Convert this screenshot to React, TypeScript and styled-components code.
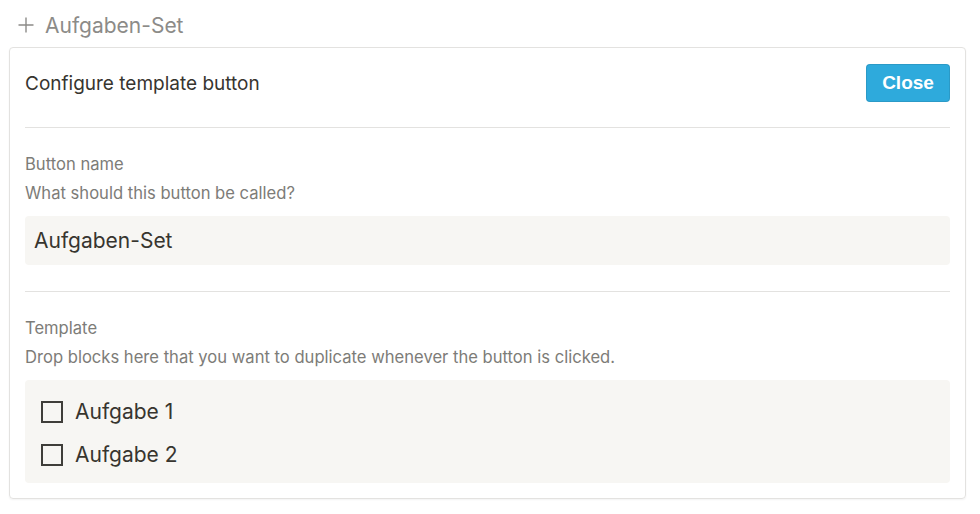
import React from 'react'
import styled, { createGlobalStyle } from 'styled-components'

const palette = {
	text: '#37352f',
	muted: '#7d7c78',
	faint: '#8c8b88',
	line: '#e3e2e0',
	field: '#f7f6f3',
	blue: '#2eaadc',
}

const GlobalStyle = createGlobalStyle`
	body {
		margin: 0;
		background: #ffffff;
		font-family: Inter, "Noto Sans", sans-serif;
		color: ${palette.text};
	}
`;

interface TodoProps {
	label: string;
}
const Todo = ({label}: TodoProps) => (
	<TodoRow>
		<Checkbox />
		<TodoText>{label}</TodoText>
	</TodoRow>
);

const PlusIcon = () => (
	<svg width="16" height="16" viewBox="0 0 16 16">
		<path d="M8 0.5v15M0.5 8h15" stroke={palette.faint} strokeWidth="1.4" fill="none" />
	</svg>
);

const App = () => {
	return (
		<>
			<GlobalStyle />
			<Page>
				<TopRow>
					<PlusIcon />
					<TopLabel>Aufgaben-Set</TopLabel>
				</TopRow>
				<Card>
					<Header>
						<Title>Configure template button</Title>
						<CloseButton>Close</CloseButton>
					</Header>
					<Section>
						<Label>Button name</Label>
						<Hint>What should this button be called?</Hint>
						<NameField>Aufgaben-Set</NameField>
					</Section>
					<Section>
						<Label>Template</Label>
						<Hint>Drop blocks here that you want to duplicate whenever the button is clicked.</Hint>
						<TemplateBox>
							<Todo label="Aufgabe 1" />
							<Todo label="Aufgabe 2" />
						</TemplateBox>
					</Section>
				</Card>
			</Page>
		</>
	);
}

const Page = styled.div`
	display: flex;
	flex-direction: column;
	padding: 0 14px 15px 9px;
`;

const TopRow = styled.div`
	display: flex;
	align-items: center;
	gap: 11px;
	height: 47px;
	padding: 3px 0 0 9px;
	box-sizing: border-box;
`;

const TopLabel = styled.div`
	font-size: 21px;
	color: ${palette.faint};
	line-height: 1;
`;

const Card = styled.div`
	border: 1px solid ${palette.line};
	border-radius: 4px;
	box-shadow: 0 1px 2px rgba(15, 15, 15, 0.05);
	padding: 16px 15px 15px 15px;
`;

const Header = styled.div`
	display: flex;
	align-items: center;
	justify-content: space-between;
	padding-bottom: 25px;
`;

const Title = styled.div`
	font-size: 19px;
	color: ${palette.text};
`;

const CloseButton = styled.button`
	width: 84px;
	height: 38px;
	border: none;
	border-radius: 4px;
	background: ${palette.blue};
	box-shadow: inset 0 0 0 1px rgba(15, 15, 15, 0.1);
	color: #ffffff;
	font-family: "Liberation Sans", Arial, sans-serif;
	font-weight: 700;
	font-size: 19px;
	cursor: pointer;
`;

const Section = styled.div`
	display: flex;
	flex-direction: column;
	border-top: 1px solid ${palette.line};
	padding-top: 22px;

	& + & {
		margin-top: 26px;
	}
`;

const Label = styled.div`
	font-size: 16.6px;
	line-height: 28px;
	color: ${palette.muted};
`;

const Hint = styled(Label)`
	margin-top: 1px;
`;

const NameField = styled.div`
	margin-top: 9px;
	height: 49px;
	display: flex;
	align-items: center;
	padding-left: 9px;
	border-radius: 4px;
	background: ${palette.field};
	font-size: 21px;
	color: ${palette.text};
`;

const TemplateBox = styled.div`
	margin-top: 9px;
	padding: 10px 16px 7px;
	border-radius: 4px;
	background: ${palette.field};
`;

const TodoRow = styled.div`
	display: flex;
	align-items: center;
	gap: 12px;
	height: 43px;
`;

const Checkbox = styled.div`
	width: 22px;
	height: 22px;
	box-sizing: border-box;
	border: 2px solid #3f3e3a;
	flex-shrink: 0;
`;

const TodoText = styled.div`
	font-size: 21px;
	color: ${palette.text};
`;

export default App
